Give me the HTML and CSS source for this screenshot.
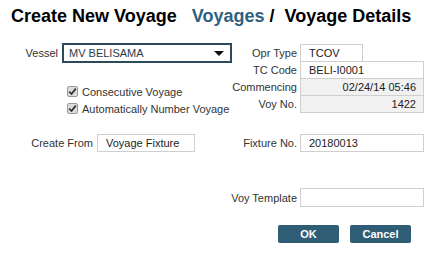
FILE: index.html
```html
<!DOCTYPE html>
<html>
<head>
<meta charset="utf-8">
<link rel="stylesheet" href="styles.css">
</head>
<body>
<header class="title">
  <span class="t-main">Create New Voyage</span><span class="crumb">Voyages</span><span class="sep">/</span><span class="t-main t-detail">Voyage Details</span>
</header>
<div class="top">
  <div class="left">
    <div class="vessel-row">
      <span class="lbl lbl-vessel">Vessel</span>
      <div class="select">MV BELISAMA<span class="caret"></span></div>
    </div>
    <div class="checks">
      <div class="check"><span class="box"><svg width="9" height="9" viewBox="0 0 9 9"><path d="M1.2 4.6 L3.5 7 L7.8 1.6" fill="none" stroke="#333" stroke-width="1.8"/></svg></span>Consecutive Voyage</div>
      <div class="check"><span class="box"><svg width="9" height="9" viewBox="0 0 9 9"><path d="M1.2 4.6 L3.5 7 L7.8 1.6" fill="none" stroke="#333" stroke-width="1.8"/></svg></span>Automatically Number Voyage</div>
    </div>
  </div>
  <div class="right">
    <div class="pair"><span class="lbl">Opr Type</span><div class="field short">TCOV</div></div>
    <div class="pair stack"><span class="lbl">TC Code</span><div class="field">BELI-I0001</div></div>
    <div class="pair stack"><span class="lbl">Commencing</span><div class="field ro">02/24/14 05:46</div></div>
    <div class="pair stack"><span class="lbl">Voy No.</span><div class="field ro">1422</div></div>
  </div>
</div>
<div class="from-row">
  <div class="from">
    <span class="lbl lbl-from">Create From</span>
    <div class="field from-field">Voyage Fixture</div>
  </div>
  <div class="pair"><span class="lbl">Fixture No.</span><div class="field">20180013</div></div>
</div>
<div class="tpl-row">
  <div class="pair"><span class="lbl">Voy Template</span><div class="field tall"></div></div>
</div>
<div class="actions">
  <button class="btn">OK</button>
  <button class="btn">Cancel</button>
</div>
</body>
</html>
```

FILE: styles.css
```css
html, body {
  margin: 0;
  padding: 0;
  background: #fff;
}
body {
  font-family: "Liberation Sans", Arial, sans-serif;
  font-size: 11px;
  color: #333;
  width: 438px;
  height: 257px;
  overflow: hidden;
}
.title {
  padding: 5px 0 0 11px;
  height: 22px;
  line-height: 22px;
  font-size: 18px;
  font-weight: bold;
  white-space: nowrap;
  color: #000;
}
.crumb {
  color: #2f5f7f;
  margin-left: 15px;
}
.sep {
  margin-left: 5px;
}
.t-detail {
  margin-left: 10px;
}
.top {
  display: flex;
  align-items: flex-start;
  margin-top: 16px;
}
.left {
  width: 227px;
  flex: none;
}
.vessel-row {
  display: flex;
  align-items: center;
}
.lbl {
  display: block;
  flex: none;
  text-align: right;
  width: 70px;
  margin-right: 3px;
  white-space: nowrap;
}
.lbl-vessel {
  width: 58px;
  margin-right: 4px;
}
.select {
  box-sizing: border-box;
  flex: none;
  width: 170px;
  height: 20px;
  border: 2px solid #2b4b5a;
  padding-left: 5px;
  line-height: 16px;
  color: #2a3b4a;
  position: relative;
}
.caret {
  position: absolute;
  right: 6px;
  top: 6px;
  width: 0;
  height: 0;
  border-left: 5px solid transparent;
  border-right: 5px solid transparent;
  border-top: 5px solid #111;
}
.checks {
  margin-top: 20px;
  padding-left: 67px;
}
.check {
  display: flex;
  align-items: center;
  height: 17px;
  white-space: nowrap;
}
.box {
  box-sizing: border-box;
  flex: none;
  width: 11px;
  height: 11px;
  border: 1px solid #9a9a9a;
  border-radius: 2px;
  background: #dcdcdc;
  margin-right: 4px;
  display: flex;
  align-items: center;
  justify-content: center;
}
.box svg {
  display: block;
}
.right {
  margin-top: 1px;
}
.pair {
  display: flex;
  align-items: center;
}
.pair.stack {
  margin-top: -1px;
}
.field {
  box-sizing: border-box;
  flex: none;
  width: 124px;
  height: 18px;
  border: 1px solid #cfcfcf;
  padding: 0 7px 0 8px;
  line-height: 16px;
  color: #222;
  background: #fff;
  white-space: nowrap;
}
.field.short {
  width: 63px;
}
.field.ro {
  background: #f1f1f1;
  text-align: right;
}
.field.tall {
  height: 19px;
}
.from-row {
  display: flex;
  margin-top: 17px;
}
.from {
  display: flex;
  align-items: center;
  width: 227px;
  flex: none;
}
.lbl-from {
  width: 93px;
  margin-right: 4px;
}
.from-field {
  width: 98px;
}
.tpl-row {
  margin-top: 36px;
  padding-left: 227px;
}
.actions {
  display: flex;
  gap: 11px;
  margin-top: 18px;
  padding-left: 278px;
}
.btn {
  width: 61px;
  height: 18px;
  padding: 0;
  border: none;
  border-radius: 2px;
  background: #2f5d76;
  color: #fff;
  font-family: "Liberation Sans", Arial, sans-serif;
  font-size: 11px;
  font-weight: bold;
  line-height: 18px;
}
```
